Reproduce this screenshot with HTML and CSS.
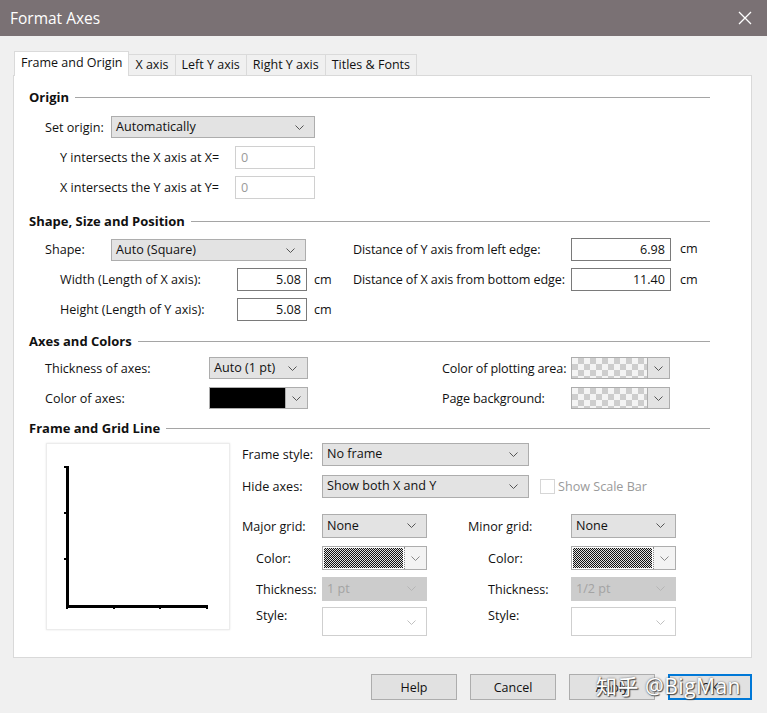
FILE: index.html
```html
<!DOCTYPE html>
<html lang="en">
<head>
<meta charset="UTF-8">
<title>Format Axes</title>
<link rel="stylesheet" href="styles.css">
</head>
<body>
<div class="dialog">
  <div class="titlebar">
    <span class="title">Format Axes</span>
    <svg class="close" width="14" height="14" viewBox="0 0 14 14"><path d="M1 1L13 13M13 1L1 13" stroke="#fff" stroke-width="1.3"/></svg>
  </div>

  <div class="tabs">
    <div class="tab active">Frame and Origin</div>
    <div class="tab">X axis</div>
    <div class="tab">Left Y axis</div>
    <div class="tab">Right Y axis</div>
    <div class="tab">Titles &amp; Fonts</div>
  </div>

  <div class="panel">
    <!-- Origin -->
    <h2 class="sec-head">Origin</h2>
    <div class="row r-setorigin">
      <span class="lbl w-setorigin">Set origin:</span>
      <div class="select w-origin">Automatically<svg class="chev" width="9" height="5" viewBox="0 0 9 5"><path d="M0.5 0.5L4.5 4.5L8.5 0.5" fill="none" stroke="#555"/></svg></div>
    </div>
    <div class="row r-inter">
      <span class="lbl w-inter">Y intersects the X axis at X=</span>
      <div class="input disabled">0</div>
    </div>
    <div class="row r-inter2">
      <span class="lbl w-inter">X intersects the Y axis at Y=</span>
      <div class="input disabled">0</div>
    </div>

    <!-- Shape -->
    <h2 class="sec-head s-shape">Shape, Size and Position</h2>
    <div class="row r-shape1">
      <div class="left-col">
        <span class="lbl w-shape">Shape:</span>
        <div class="select w-shapesel">Auto (Square)<svg class="chev" width="9" height="5" viewBox="0 0 9 5"><path d="M0.5 0.5L4.5 4.5L8.5 0.5" fill="none" stroke="#555"/></svg></div>
      </div>
      <span class="lbl w-dist">Distance of Y axis from left edge:</span>
      <div class="input num w-distin">6.98</div>
      <span class="unit u-right u-up">cm</span>
    </div>
    <div class="row r-shape2">
      <div class="left-col indent">
        <span class="lbl w-size">Width (Length of X axis):</span>
        <div class="input num w-sizein">5.08</div>
        <span class="unit">cm</span>
      </div>
      <span class="lbl w-dist">Distance of X axis from bottom edge:</span>
      <div class="input num w-distin">11.40</div>
      <span class="unit u-right">cm</span>
    </div>
    <div class="row r-shape3">
      <div class="left-col indent">
        <span class="lbl w-size">Height (Length of Y axis):</span>
        <div class="input num w-sizein">5.08</div>
        <span class="unit">cm</span>
      </div>
    </div>

    <!-- Axes and colors -->
    <h2 class="sec-head s-axes">Axes and Colors</h2>
    <div class="row r-axes1">
      <div class="axes-left">
        <span class="lbl w-thick">Thickness of axes:</span>
        <div class="select w-thicksel">Auto (1 pt)<svg class="chev" width="9" height="5" viewBox="0 0 9 5"><path d="M0.5 0.5L4.5 4.5L8.5 0.5" fill="none" stroke="#555"/></svg></div>
      </div>
      <span class="lbl w-plot">Color of plotting area:</span>
      <div class="picker w-picker"><div class="swatch checker"></div><div class="drop"><svg width="9" height="5" viewBox="0 0 9 5"><path d="M0.5 0.5L4.5 4.5L8.5 0.5" fill="none" stroke="#555"/></svg></div></div>
    </div>
    <div class="row r-axes2">
      <div class="axes-left">
        <span class="lbl w-thick">Color of axes:</span>
        <div class="picker w-thicksel"><div class="swatch black"></div><div class="drop"><svg width="9" height="5" viewBox="0 0 9 5"><path d="M0.5 0.5L4.5 4.5L8.5 0.5" fill="none" stroke="#555"/></svg></div></div>
      </div>
      <span class="lbl w-plot">Page background:</span>
      <div class="picker w-picker"><div class="swatch checker"></div><div class="drop"><svg width="9" height="5" viewBox="0 0 9 5"><path d="M0.5 0.5L4.5 4.5L8.5 0.5" fill="none" stroke="#555"/></svg></div></div>
    </div>

    <!-- Frame and grid -->
    <h2 class="sec-head s-frame">Frame and Grid Line</h2>
    <div class="frame-body">
      <div class="preview">
        <svg width="184" height="187" viewBox="0 0 184 187">
          <g stroke="#000" stroke-width="2">
            <path d="M18 24H21M18 70H21M18 116H21"/>
            <path d="M68 163V166M114 163V166M161 163V166M21 163V166"/>
          </g>
          <path d="M21.5 23V163.5H162" fill="none" stroke="#000" stroke-width="3"/>
        </svg>
      </div>
      <div class="controls">
        <div class="row r-fstyle">
          <span class="lbl w-ctl">Frame style:</span>
          <div class="select w-wide">No frame<svg class="chev" width="9" height="5" viewBox="0 0 9 5"><path d="M0.5 0.5L4.5 4.5L8.5 0.5" fill="none" stroke="#555"/></svg></div>
        </div>
        <div class="row r-hide">
          <span class="lbl w-ctl">Hide axes:</span>
          <div class="select w-wide">Show both X and Y<svg class="chev" width="9" height="5" viewBox="0 0 9 5"><path d="M0.5 0.5L4.5 4.5L8.5 0.5" fill="none" stroke="#555"/></svg></div>
          <span class="check"></span>
          <span class="lbl dim">Show Scale Bar</span>
        </div>
        <div class="row r-grid">
          <div class="grid-left">
            <span class="lbl w-ctl">Major grid:</span>
            <div class="select w-small">None<svg class="chev" width="9" height="5" viewBox="0 0 9 5"><path d="M0.5 0.5L4.5 4.5L8.5 0.5" fill="none" stroke="#555"/></svg></div>
          </div>
          <span class="lbl w-minor">Minor grid:</span>
          <div class="select w-small">None<svg class="chev" width="9" height="5" viewBox="0 0 9 5"><path d="M0.5 0.5L4.5 4.5L8.5 0.5" fill="none" stroke="#555"/></svg></div>
        </div>
        <div class="row r-gcolor">
          <div class="grid-left sub">
            <span class="lbl w-sub">Color:</span>
            <div class="picker w-small"><div class="swatch dither"></div><div class="drop dotted"><svg width="9" height="5" viewBox="0 0 9 5"><path d="M0.5 0.5L4.5 4.5L8.5 0.5" fill="none" stroke="#888"/></svg></div></div>
          </div>
          <span class="lbl w-subr">Color:</span>
          <div class="picker w-small"><div class="swatch dither"></div><div class="drop dotted"><svg width="9" height="5" viewBox="0 0 9 5"><path d="M0.5 0.5L4.5 4.5L8.5 0.5" fill="none" stroke="#888"/></svg></div></div>
        </div>
        <div class="row r-gthick">
          <div class="grid-left sub">
            <span class="lbl w-sub">Thickness:</span>
            <div class="select off w-small">1 pt<svg class="chev" width="9" height="5" viewBox="0 0 9 5"><path d="M0.5 0.5L4.5 4.5L8.5 0.5" fill="none" stroke="#b5b5b5"/></svg></div>
          </div>
          <span class="lbl w-subr">Thickness:</span>
          <div class="select off w-small">1/2 pt<svg class="chev" width="9" height="5" viewBox="0 0 9 5"><path d="M0.5 0.5L4.5 4.5L8.5 0.5" fill="none" stroke="#b5b5b5"/></svg></div>
        </div>
        <div class="row r-gstyle">
          <div class="grid-left sub">
            <span class="lbl w-sub">Style:</span>
            <div class="select blank w-small"><svg class="chev" width="9" height="5" viewBox="0 0 9 5"><path d="M0.5 0.5L4.5 4.5L8.5 0.5" fill="none" stroke="#c0c0c0"/></svg></div>
          </div>
          <span class="lbl w-subr">Style:</span>
          <div class="select blank w-small"><svg class="chev" width="9" height="5" viewBox="0 0 9 5"><path d="M0.5 0.5L4.5 4.5L8.5 0.5" fill="none" stroke="#c0c0c0"/></svg></div>
        </div>
      </div>
    </div>
  </div>

  <div class="buttons">
    <button class="btn">Help</button>
    <button class="btn">Cancel</button>
    <button class="btn">Apply</button>
    <button class="btn default">OK</button>
  </div>

  <div class="watermark">知乎 @BigMan</div>
</div>
</body>
</html>
```

FILE: styles.css
```css
body {
    margin: 0;
    padding: 0;
    font-family: "Open Sans", "Noto Sans", "Noto Sans CJK SC", sans-serif;
    font-size: 12.6px;
    color: #111;
}
.dialog {
    position: relative;
    width: 767px;
    height: 713px;
    background: #f0f0f0;
    overflow: hidden;
}
.titlebar {
    height: 36px;
    background: #7a7174;
    display: flex;
    align-items: center;
    justify-content: space-between;
    padding: 0 15px 0 10px;
}
.title {
    color: #fff;
    font-size: 15.5px;
}
.close {
    display: block;
}

/* tabs */
.tabs {
    display: flex;
    align-items: flex-end;
    margin: 15px 0 0 14px;
    height: 24px;
    position: relative;
    z-index: 1;
}
.tab {
    height: 20px;
    line-height: 19px;
    padding: 0 6px;
    border: 1px solid #dadada;
    border-bottom: none;
    border-left: none;
    background: #f0f0f0;
    font-size: 12.5px;
}
.tab.active {
    height: 24px;
    line-height: 22px;
    background: #fff;
    border-left: 1px solid #dadada;
    margin-bottom: -1px;
    padding: 0 6px;
}

.panel {
    margin-left: 13px;
    width: 681px;
    height: 568px;
    background: #fff;
    border: 1px solid #d9d9d9;
    padding: 13px 41px 0 15px;
}

/* section headings */
.sec-head {
    margin: 0;
    height: 16px;
    display: flex;
    align-items: center;
    gap: 6px;
    font-size: 13px;
    font-weight: bold;
}
.sec-head::after {
    content: "";
    flex: 1;
    border-top: 1px solid #a5a5a5;
}
.s-shape { margin-top: 14px; }
.s-axes { margin-top: 12px; }
.s-frame { margin-top: 11px; }

.row {
    display: flex;
    align-items: center;
    padding-left: 16px;
}
.lbl {
    white-space: nowrap;
    flex-shrink: 0;
}
.dim { color: #9a9a9a; }

/* inputs */
.select {
    position: relative;
    height: 22px;
    box-sizing: border-box;
    background: #e3e3e3;
    border: 1px solid #adadad;
    padding: 0 0 0 4px;
    line-height: 20px;
    flex-shrink: 0;
}
.select .chev {
    position: absolute;
    right: 10px;
    top: 8px;
}
.select.off {
    background: #cccccc;
    border-color: #cccccc;
    color: #a3a3a3;
}
.select.blank {
    background: #fff;
    border-color: #cfcfcf;
    height: 29px;
}
.select.blank .chev { top: 12px; }
.input {
    height: 23px;
    box-sizing: border-box;
    border: 1px solid #7a7a7a;
    background: #fff;
    line-height: 21px;
    padding: 0 5px;
    flex-shrink: 0;
}
.input.disabled {
    width: 80px;
    border-color: #d0d0d0;
    color: #9a9a9a;
}
.input.num { text-align: right; }
.unit { margin-left: 7px; }
.u-right { margin-left: 9px; }
.u-up { margin-top: -3px; }

.picker {
    display: flex;
    height: 22px;
    box-sizing: border-box;
    border: 1px solid #adadad;
    flex-shrink: 0;
}
.swatch { flex: 1; }
.swatch.black { background: #000; }
.swatch.checker {
    background: repeating-conic-gradient(#cdcdcd 0 25%, #f4f4f4 0 50%) 0 0 / 12px 12px;
}
.swatch.dither {
    border: 1px solid #fff;
    background: repeating-conic-gradient(#111 0 25%, #e0e0e0 0 50%) 0 0 / 2px 2px;
}
.drop {
    width: 21px;
    background: #e3e3e3;
    border-left: 1px solid #adadad;
    display: flex;
    align-items: center;
    justify-content: center;
}
.drop.dotted {
    background: #f3f3f3;
    border-left: 1px dotted #888;
}

/* origin */
.r-setorigin { margin-top: 11px; }
.w-setorigin { width: 66px; }
.w-origin { width: 204px; }
.r-inter { margin-top: 8px; padding-left: 31px; }
.r-inter2 { margin-top: 7px; padding-left: 31px; }
.w-inter { width: 175px; }

/* shape */
.r-shape1 { margin-top: 9px; height: 23px; }
.r-shape2, .r-shape3 { margin-top: 7px; height: 23px; }
.left-col {
    width: 308px;
    display: flex;
    align-items: center;
    flex-shrink: 0;
}
.left-col.indent { padding-left: 15px; width: 293px; }
.w-shape { width: 66px; }
.w-shapesel { width: 195px; }
.w-size { width: 177px; }
.w-sizein { width: 70px; }
.w-dist { width: 218px; letter-spacing: -0.12px; }
.w-distin { width: 100px; }

/* axes */
.r-axes1 { margin-top: 8px; }
.r-axes2 { margin-top: 8px; }
.axes-left {
    width: 397px;
    display: flex;
    align-items: center;
    flex-shrink: 0;
}
.w-thick { width: 164px; }
.w-thicksel { width: 99px; }
.w-plot { width: 129px; letter-spacing: -0.15px; }
.w-picker { width: 99px; }

/* frame and grid */
.frame-body {
    display: flex;
    margin-top: 7px;
    padding-left: 17px;
}
.preview {
    width: 184px;
    height: 187px;
    box-sizing: border-box;
    background: #fff;
    border: 1px solid #ececec;
    box-shadow: 0 0 2px #e6e6e6;
}
.preview svg { display: block; margin: -1px; }
.controls {
    margin-left: 12px;
}
.controls .row { padding-left: 0; }
.w-ctl { width: 80px; }
.w-wide { width: 207px; }
.w-small { width: 105px; }
.r-fstyle .select, .r-hide .select { height: 23px; }
.r-hide { margin-top: 9px; }
.check {
    width: 15px;
    height: 15px;
    box-sizing: border-box;
    border: 1px solid #d6d6d6;
    background: #fff;
    margin: 0 3px 0 11px;
}
.r-grid { margin-top: 16px; }
.r-grid .select { height: 24px; line-height: 21px; }
.grid-left {
    width: 226px;
    display: flex;
    align-items: center;
    flex-shrink: 0;
}
.grid-left.sub { padding-left: 14px; width: 212px; }
.w-minor { width: 103px; }
.w-sub { width: 66px; }
.w-subr { width: 83px; padding-left: 20px; }
.r-gcolor { margin-top: 8px; }
.r-gcolor .picker { height: 24px; }
.r-gthick { margin-top: 7px; }
.r-gthick .select { height: 24px; line-height: 22px; }
.r-gstyle { margin-top: 6px; align-items: flex-start; }
.r-gstyle .grid-left { align-items: flex-start; }

/* buttons */
.buttons {
    display: flex;
    justify-content: flex-end;
    gap: 13px;
    margin: 16px 15px 0 0;
}
.btn {
    width: 86px;
    height: 26px;
    background: #e1e1e1;
    border: 1px solid #adadad;
    font-family: inherit;
    font-size: 12.5px;
    color: #111;
    padding: 0;
}
.btn.default {
    border: 2px solid #0078d7;
    width: 84px;
}

.watermark {
    position: absolute;
    left: 596px;
    top: 670px;
    font-size: 21px;
    color: #fff;
    text-shadow: 0 0 2px #555, 1px 1px 1px #444;
    letter-spacing: 0.5px;
}
```
